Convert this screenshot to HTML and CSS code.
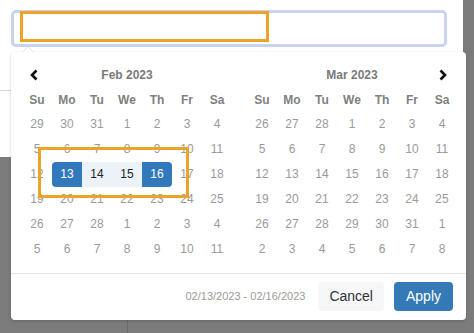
FILE: index.html
```html
<!DOCTYPE html>
<html>
<head>
<meta charset="utf-8">
<link rel="stylesheet" href="styles.css">
</head>
<body>
<div class="backdrop">
  <div class="sheet"><div class="rule"></div></div>
  <div class="lower"><div class="lower-left"></div></div>
</div>

<div class="field"></div>
<div class="mark mark-input"></div>

<div class="popup">
  <div class="months">
    <div class="cal">
      <div class="nav">
        <svg width="10" height="12" viewBox="0 0 10 12"><path d="M7.5 1.5 L3 6 L7.5 10.5" fill="none" stroke="#111" stroke-width="2.6"/></svg>
      </div>
      <div class="title">Feb 2023</div>
      <div class="blank"></div>
      <div class="dn">Su</div><div class="dn">Mo</div><div class="dn">Tu</div><div class="dn">We</div><div class="dn">Th</div><div class="dn">Fr</div><div class="dn">Sa</div>
      <div class="d">29</div><div class="d">30</div><div class="d">31</div><div class="d">1</div><div class="d">2</div><div class="d">3</div><div class="d">4</div>
      <div class="d">5</div><div class="d">6</div><div class="d">7</div><div class="d">8</div><div class="d">9</div><div class="d">10</div><div class="d">11</div>
      <div class="d">12</div><div class="d sel start">13</div><div class="d range">14</div><div class="d range">15</div><div class="d sel end">16</div><div class="d">17</div><div class="d">18</div>
      <div class="d">19</div><div class="d">20</div><div class="d">21</div><div class="d">22</div><div class="d">23</div><div class="d">24</div><div class="d">25</div>
      <div class="d">26</div><div class="d">27</div><div class="d">28</div><div class="d">1</div><div class="d">2</div><div class="d">3</div><div class="d">4</div>
      <div class="d">5</div><div class="d">6</div><div class="d">7</div><div class="d">8</div><div class="d">9</div><div class="d">10</div><div class="d">11</div>
    </div>
    <div class="cal">
      <div class="blank"></div>
      <div class="title">Mar 2023</div>
      <div class="nav">
        <svg width="10" height="12" viewBox="0 0 10 12"><path d="M2.5 1.5 L7 6 L2.5 10.5" fill="none" stroke="#111" stroke-width="2.6"/></svg>
      </div>
      <div class="dn">Su</div><div class="dn">Mo</div><div class="dn">Tu</div><div class="dn">We</div><div class="dn">Th</div><div class="dn">Fr</div><div class="dn">Sa</div>
      <div class="d">26</div><div class="d">27</div><div class="d">28</div><div class="d">1</div><div class="d">2</div><div class="d">3</div><div class="d">4</div>
      <div class="d">5</div><div class="d">6</div><div class="d">7</div><div class="d">8</div><div class="d">9</div><div class="d">10</div><div class="d">11</div>
      <div class="d">12</div><div class="d">13</div><div class="d">14</div><div class="d">15</div><div class="d">16</div><div class="d">17</div><div class="d">18</div>
      <div class="d">19</div><div class="d">20</div><div class="d">21</div><div class="d">22</div><div class="d">23</div><div class="d">24</div><div class="d">25</div>
      <div class="d">26</div><div class="d">27</div><div class="d">28</div><div class="d">29</div><div class="d">30</div><div class="d">31</div><div class="d">1</div>
      <div class="d">2</div><div class="d">3</div><div class="d">4</div><div class="d">5</div><div class="d">6</div><div class="d">7</div><div class="d">8</div>
    </div>
  </div>
  <div class="footer">
    <span class="range-text">02/13/2023 - 02/16/2023</span>
    <button class="btn cancel">Cancel</button>
    <button class="btn apply">Apply</button>
  </div>
</div>

<div class="mark mark-range"></div>
</body>
</html>
```
FILE: styles.css
```css
html, body {
  margin: 0;
  padding: 0;
}
body {
  width: 474px;
  height: 333px;
  overflow: hidden;
  position: relative;
  background: #7b7b7b;
  font-family: "Liberation Sans", Arial, sans-serif;
}
.backdrop {
  display: flex;
  flex-direction: column;
  height: 333px;
}
.sheet {
  width: 463px;
  height: 157px;
  background: #fff;
  padding-top: 90px;
  box-sizing: border-box;
}
.rule {
  height: 1px;
  background: #d6d6d6;
}
.lower {
  flex: 1;
  display: flex;
}
.lower-left {
  width: 127px;
  border-right: 1px solid #6a6a6a;
}
.field {
  position: absolute;
  left: 11px;
  top: 10px;
  width: 436px;
  height: 37px;
  box-sizing: border-box;
  border: 3px solid #c9d3f1;
  border-radius: 5px;
  background: #fff;
}
.mark {
  position: absolute;
  border: 3px solid #eda325;
  box-sizing: border-box;
}
.mark-input {
  left: 20px;
  top: 11px;
  width: 249px;
  height: 31px;
}
.mark-range {
  left: 38px;
  top: 147px;
  width: 151px;
  height: 51px;
}
.popup {
  position: absolute;
  left: 11px;
  top: 52px;
  width: 455px;
  height: 268px;
  box-sizing: border-box;
  background: #fff;
  border-radius: 4px;
  box-shadow: 0 1px 3px rgba(0,0,0,0.18);
  padding-top: 10px;
}
.popup::before {
  content: "";
  position: absolute;
  left: 11px;
  top: -6px;
  border-left: 6px solid transparent;
  border-right: 6px solid transparent;
  border-bottom: 6px solid #e2e2e2;
}
.popup::after {
  content: "";
  position: absolute;
  left: 12px;
  top: -5px;
  border-left: 5px solid transparent;
  border-right: 5px solid transparent;
  border-bottom: 5px solid #fff;
}
.months {
  display: flex;
  gap: 15px;
  padding: 0 9px 0 11px;
  height: 200px;
}
.cal {
  display: grid;
  grid-template-columns: repeat(7, 30px);
  grid-auto-rows: 25px;
  align-items: center;
  justify-items: center;
}
.nav {
  display: flex;
  align-items: center;
  justify-content: center;
  height: 25px;
}
.cal:first-child .nav {
  margin-right: 6px;
}
.cal:last-child .nav {
  margin-left: 2px;
}
.title {
  grid-column: span 5;
  font-size: 12px;
  font-weight: bold;
  color: #7a7a7a;
}
.dn {
  font-size: 12px;
  font-weight: bold;
  color: #808080;
}
.d {
  width: 30px;
  height: 25px;
  line-height: 25px;
  text-align: center;
  font-size: 12px;
  color: #9a9a9a;
}
.d.range {
  background: #ebf3f8;
  color: #222;
}
.d.sel {
  background: #3279bc;
  color: #fff;
}
.d.start {
  border-radius: 4px 0 0 4px;
}
.d.end {
  border-radius: 0 4px 4px 0;
}
.footer {
  margin-top: 11px;
  border-top: 1px solid #e6e6e6;
  height: 46px;
  box-sizing: border-box;
  display: flex;
  align-items: center;
  justify-content: flex-end;
  padding: 0 13px 1px 0;
}
.range-text {
  font-size: 11px;
  color: #9a9a9a;
  margin-right: 13px;
}
.btn {
  font-family: "Liberation Sans", Arial, sans-serif;
  font-size: 14px;
  height: 29px;
  padding: 0 11px;
  border: none;
  border-radius: 4px;
  cursor: pointer;
}
.cancel {
  background: #f5f7f9;
  color: #333;
  margin-right: 10px;
}
.apply {
  background: #337ab7;
  color: #fff;
  padding: 0 12px;
}
```
